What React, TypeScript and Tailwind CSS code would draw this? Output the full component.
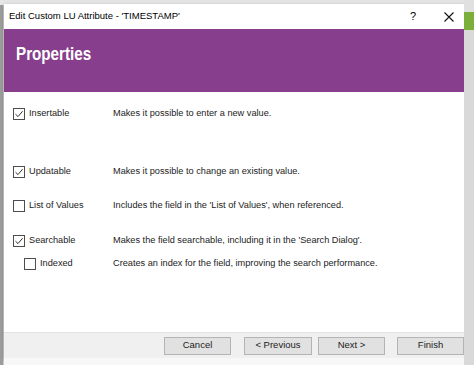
import React from "react";

type RowProps = {
  label: string;
  text: string;
  checked: boolean;
  indent?: boolean;
  className?: string;
};

const CheckBox = ({ checked }: { checked: boolean }) => (
  <div className="w-[12px] h-[12px] border border-[#4d4d4d] bg-white flex items-center justify-center shrink-0">
    {checked && (
      <svg width="10" height="10" viewBox="0 0 10 10">
        <path d="M1.5 5.2 L4 7.6 L8.6 2.2" fill="none" stroke="#333" strokeWidth="1" />
      </svg>
    )}
  </div>
);

const Row = ({ label, text, checked, indent, className }: RowProps) => (
  <div className={"flex items-center h-[14px] " + (className ?? "")}>
    <div className={"flex items-center w-[104px] " + (indent ? "pl-[20px]" : "pl-[9px]")}>
      <CheckBox checked={checked} />
      <span className="ml-[4px]">{label}</span>
    </div>
    <span className="ml-[5px]">{text}</span>
  </div>
);

const Button = ({ children, className }: { children: React.ReactNode; className?: string }) => (
  <button className={"h-[18px] w-[67px] bg-[#e1e1e1] border border-[#b4b4b4] text-[9.5px] text-[#222] flex items-center justify-center " + (className ?? "")}>
    {children}
  </button>
);

export default function App() {
  return (
    <div className="w-[474px] h-[365px] bg-[#f2f2f2] overflow-hidden flex" style={{ fontFamily: "'Liberation Sans', Arial, sans-serif" }}>
      <div className="w-[4px] h-full flex flex-col">
        <div className="h-[5px] bg-[#e6e6e6]" />
        <div className="flex-1 bg-[#9c9c9c] border-r border-[#c8c8c8]" />
      </div>
      <div className="flex flex-col">
        <div className="h-[4px] bg-[#e4e4e4]" />
        <div className="w-[460px] h-[354px] flex flex-col bg-white shadow-[0_1px_3px_rgba(0,0,0,0.25)]">
          <div className="h-[25px] flex items-center pl-[5px] text-[9.5px] text-black">
            <span>Edit Custom LU Attribute - 'TIMESTAMP'</span>
            <span className="ml-auto mr-[28px] text-[11px]">?</span>
            <svg width="10" height="10" viewBox="0 0 10 10" className="mr-[10px]">
              <path d="M0.5 0.5 L9.5 9.5 M9.5 0.5 L0.5 9.5" stroke="#111" strokeWidth="1.1" />
            </svg>
          </div>
          <div className="h-[63px] bg-[#873f8d] pl-[12px] pt-[14px]">
            <span className="inline-block origin-left scale-x-[0.8] text-white font-bold text-[19px] leading-[22px]">
              Properties
            </span>
          </div>
          <div className="flex-1 flex flex-col text-[9.2px] text-[#222] pt-[15px]">
            <Row label="Insertable" text="Makes it possible to enter a new value." checked />
            <Row label="Updatable" text="Makes it possible to change an existing value." checked className="mt-[44px]" />
            <Row label="List of Values" text="Includes the field in the 'List of Values', when referenced." checked={false} className="mt-[20px]" />
            <Row label="Searchable" text="Makes the field searchable, including it in the 'Search Dialog'." checked className="mt-[21px]" />
            <Row label="Indexed" text="Creates an index for the field, improving the search performance." checked={false} indent className="mt-[9px]" />
          </div>
          <div className="h-[26px] bg-[#f0f0f0] border-t border-[#e3e3e3] flex items-center">
            <Button className="ml-[160px]">Cancel</Button>
            <Button className="ml-[13px] w-[68px]">&lt; Previous</Button>
            <Button className="ml-[6px]">Next &gt;</Button>
            <Button className="ml-[12px]">Finish</Button>
          </div>
        </div>
        <div className="flex-1 bg-[#f7f7f7]" />
      </div>
      <div className="flex-1 flex flex-col">
        <div className="h-[12px] bg-[#e0e0e0]" />
        <div className="h-[18px] bg-[#7cae3c]" />
        <div className="flex-1 bg-[#d9d9d9]" />
      </div>
    </div>
  );
}
